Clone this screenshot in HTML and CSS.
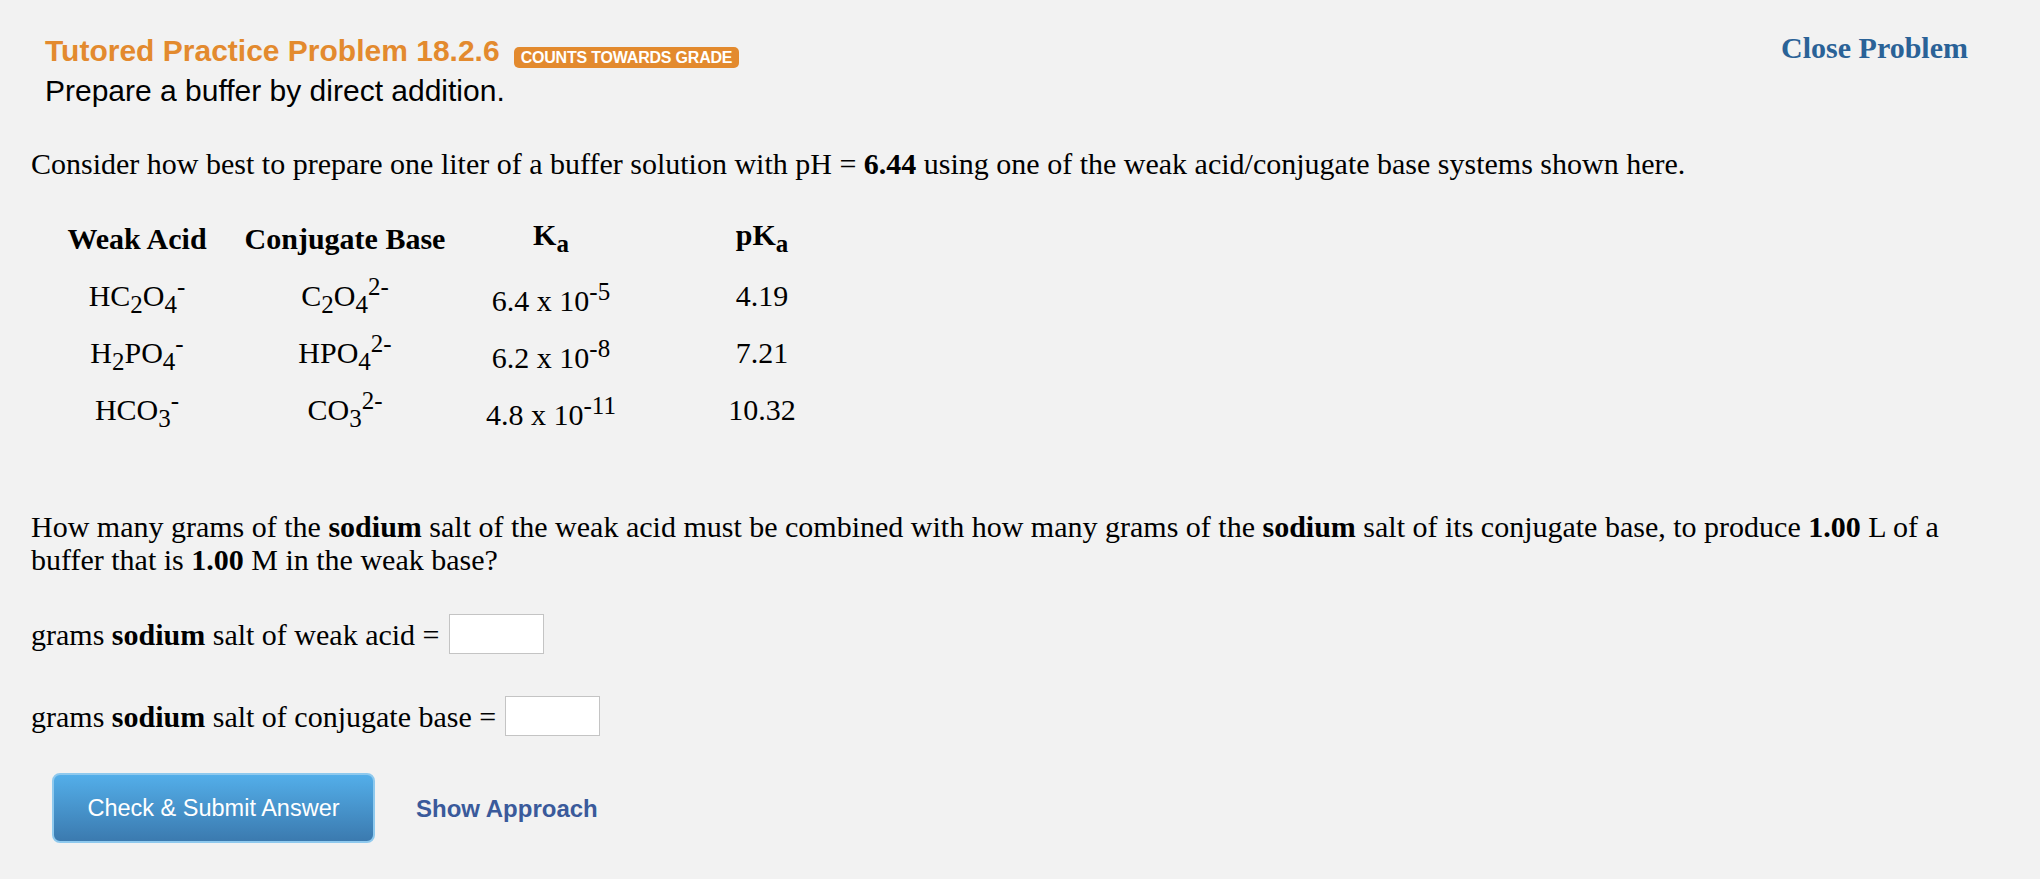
FILE: index.html
```html
<!DOCTYPE html>
<html>
<head>
<meta charset="utf-8">
<link rel="stylesheet" href="styles.css">
</head>
<body>
<div class="page">
  <div class="header">
    <div class="titles">
      <div class="title-line"><span class="title">Tutored Practice Problem 18.2.6</span><span class="badge">COUNTS TOWARDS GRADE</span></div>
      <div class="subtitle">Prepare a buffer by direct addition.</div>
    </div>
    <a class="close" href="#">Close Problem</a>
  </div>

  <p class="intro">Consider how best to prepare one liter of a buffer solution with pH = <b>6.44</b> using one of the weak acid/conjugate base systems shown here.</p>

  <table class="systems">
    <thead>
      <tr>
        <th class="c1">Weak Acid</th>
        <th class="c2">Conjugate Base</th>
        <th class="c3">K<sub>a</sub></th>
        <th class="c4">pK<sub>a</sub></th>
      </tr>
    </thead>
    <tbody>
      <tr>
        <td>HC<sub>2</sub>O<sub>4</sub><sup>-</sup></td>
        <td>C<sub>2</sub>O<sub>4</sub><sup>2-</sup></td>
        <td>6.4 x 10<sup>-5</sup></td>
        <td>4.19</td>
      </tr>
      <tr>
        <td>H<sub>2</sub>PO<sub>4</sub><sup>-</sup></td>
        <td>HPO<sub>4</sub><sup>2-</sup></td>
        <td>6.2 x 10<sup>-8</sup></td>
        <td>7.21</td>
      </tr>
      <tr>
        <td>HCO<sub>3</sub><sup>-</sup></td>
        <td>CO<sub>3</sub><sup>2-</sup></td>
        <td>4.8 x 10<sup>-11</sup></td>
        <td>10.32</td>
      </tr>
    </tbody>
  </table>

  <p class="question">How many grams of the <b>sodium</b> salt of the weak acid must be combined with how many grams of the <b>sodium</b> salt of its conjugate base, to produce <b>1.00</b> L of a buffer that is <b>1.00</b> M in the weak base?</p>

  <div class="answer first">
    <span class="label">grams <b>sodium</b> salt of weak acid =</span>
    <input class="box" type="text">
  </div>
  <div class="answer">
    <span class="label">grams <b>sodium</b> salt of conjugate base =</span>
    <input class="box" type="text">
  </div>

  <div class="actions">
    <button class="submit" type="button">Check &amp; Submit Answer</button>
    <a class="approach" href="#">Show Approach</a>
  </div>
</div>
</body>
</html>
```

FILE: styles.css
```css
html, body {
  margin: 0;
  padding: 0;
  background: #f2f2f2;
}

.page {
  padding: 0 31px;
  font-family: "Liberation Serif", "Times New Roman", serif;
  font-size: 30px;
  line-height: 33px;
  color: #000;
}

.header {
  display: flex;
  justify-content: space-between;
  align-items: flex-start;
  padding: 31px 41px 0 14px;
}

.titles {
  font-family: "Liberation Sans", Arial, sans-serif;
  font-size: 30px;
  line-height: 40px;
}

.title-line {
  display: flex;
  align-items: baseline;
}

.title {
  color: #e38a2e;
  font-weight: bold;
}

.badge {
  margin-left: 14px;
  background: #e38a2e;
  color: #fff;
  font-weight: bold;
  font-size: 16px;
  line-height: 21px;
  padding: 0 7px;
  border-radius: 5px;
  letter-spacing: -0.2px;
  position: relative;
  top: 2px;
}

.subtitle {
  color: #000;
}

.close {
  font-family: "Liberation Serif", "Times New Roman", serif;
  font-weight: bold;
  font-size: 30px;
  line-height: 40px;
  color: #2a6297;
  text-decoration: none;
  margin-top: -3px;
}

.intro {
  margin: 36px 0 0 0;
}

.systems {
  margin-top: 30px;
  border-collapse: collapse;
  border-spacing: 0;
  table-layout: fixed;
}

.systems th,
.systems td {
  padding: 0;
  height: 57px;
  text-align: center;
  vertical-align: middle;
  font-weight: normal;
}

.systems th {
  font-weight: bold;
}

.systems .c1 { width: 212px; }
.systems .c2 { width: 204px; }
.systems .c3 { width: 208px; }
.systems .c4 { width: 214px; }

.question {
  margin: 72px 0 0 0;
}

.answer {
  display: flex;
  align-items: center;
  gap: 9px;
  margin-top: 42px;
}

.answer.first {
  margin-top: 38px;
}

.box {
  width: 95px;
  height: 40px;
  box-sizing: border-box;
  border: 1px solid #c4c4c4;
  background: #fff;
  margin: 0;
  padding: 0;
}

.actions {
  display: flex;
  align-items: center;
  gap: 41px;
  margin-top: 37px;
  padding-left: 21px;
}

.submit {
  width: 323px;
  height: 70px;
  box-sizing: border-box;
  border: 2px solid #8ec9ee;
  border-radius: 8px;
  background: linear-gradient(#53aee9, #3b7aaf);
  color: #fff;
  font-family: "Liberation Sans", Arial, sans-serif;
  font-size: 23.5px;
  padding: 0;
}

.approach {
  font-family: "Liberation Sans", Arial, sans-serif;
  font-weight: bold;
  font-size: 24px;
  color: #3a5a9b;
  text-decoration: none;
}
```
